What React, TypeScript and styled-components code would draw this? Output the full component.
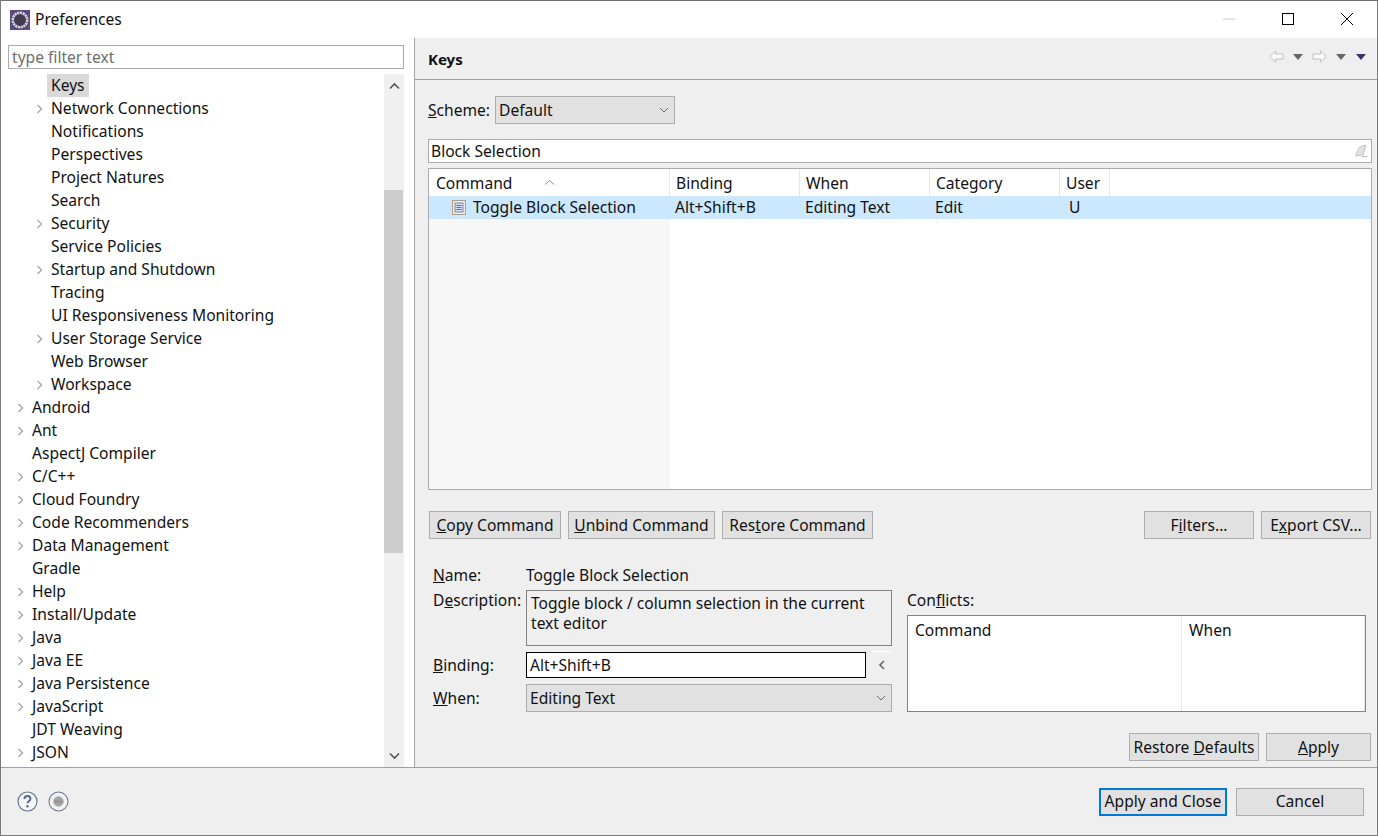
import React from "react";
import styled, { createGlobalStyle } from "styled-components";

const Global = createGlobalStyle`
  html, body { margin: 0; padding: 0; background: #fff; }
  * { box-sizing: border-box; }
  body { font-family: "Noto Sans", "Open Sans", sans-serif; font-size: 15.6px; color: #111; }
`;

const Window = styled.div`
  width: 1378px; height: 836px; display: flex; flex-direction: column;
  border: 1px solid #7b7b7b; border-top-color: #6e6e6e; border-bottom-color: #7b7b7b;
  background: #efefef; overflow: hidden; line-height: 23px;
`;
const TitleBar = styled.div`
  height: 37px; flex: none; background: #fff; display: flex; align-items: center; padding: 0 1px 0 9px;
`;
const TitleText = styled.div`flex: 1; margin: -1px 0 0 5px;`;
const WinBtn = styled.div`
  width: 59px; height: 37px; display: flex; align-items: center; justify-content: center; margin-top: -1px;
`;
const Main = styled.div`flex: 1; display: flex; min-height: 0;`;
const LeftPane = styled.div`
  width: 414px; flex: none; background: #fff; display: flex; flex-direction: column;
  padding: 7px 10px 0 7px; border-right: 1px solid #a3a3a3;
`;
const FilterInput = styled.div<{ $mt?: number; $filled?: boolean }>`
  height: 24px; flex: none; border: 1px solid #ababab; background: #fff; display: flex; align-items: center;
  justify-content: space-between; padding: 0 3px 0 ${(p) => (p.$filled ? 2 : 3)}px; color: ${(p) => (p.$filled ? "#111" : "#6d6d6d")}; margin-top: ${(p) => p.$mt ?? 0}px;
`;
const TreeArea = styled.div`flex: 1; display: flex; min-height: 0; margin-top: 5px;`;
const Tree = styled.div`flex: 1; overflow: hidden;`;
const TreeRow = styled.div<{ $level: number }>`
  height: 23px; display: flex; align-items: center; padding-left: ${(p) => (p.$level ? 28 : 9)}px; white-space: nowrap;
`;
const Arrow = styled.span`width: 15px; flex: none; display: flex; align-items: center;`;
const TreeLabel = styled.span<{ $sel?: boolean }>`
  padding: 0 4px; height: 23px; margin-left: -4px; background: ${(p) => (p.$sel ? "#d9d9d9" : "transparent")};
`;
const Scrollbar = styled.div`
  width: 20px; flex: none; background: #f0f0f0; display: flex; flex-direction: column;
`;
const ScrollCap = styled.div`height: 23px; flex: none; display: flex; align-items: center; justify-content: center;`;
const ScrollSpace = styled.div`height: 93px; flex: none;`;
const ScrollThumb = styled.div`height: 363px; flex: none; background: #cdcdcd; margin-right: 1px;`;

const RightPane = styled.div`flex: 1; display: flex; flex-direction: column; min-width: 0;`;
const PageHead = styled.div`
  height: 42px; flex: none; border-bottom: 1px solid #a0a0a0; display: flex; align-items: center;
  justify-content: space-between; padding: 0 11px 0 13px;
`;
const PageTitle = styled.div`font-weight: 700; font-size: 15px; margin-top: 2px;`;
const NavIcons = styled.div`display: flex; align-items: center; margin-top: -4px;`;
const NavGap = styled.span<{ $w: number }>`width: ${(p) => p.$w}px;`;
const Body = styled.div`flex: 1; display: flex; flex-direction: column; padding: 16px 5px 0 13px; min-height: 0;`;
const SchemeRow = styled.div`display: flex; align-items: center; height: 28px;`;
const SchemeLabel = styled.span`width: 67px; flex: none;`;
const Combo = styled.div<{ $w: number }>`
  width: ${(p) => p.$w}px; height: 28px; border: 1px solid #adadad; background: #e1e1e1; display: flex;
  align-items: center; justify-content: space-between; padding: 0 4px 0 3px;
`;
const TableBox = styled.div`
  height: 322px; flex: none; margin-top: 5px; border: 1px solid #ababab; background: #fff; display: flex; flex-direction: column;
`;
const THead = styled.div`height: 27px; flex: none; display: flex;`;
const TH = styled.div<{ $w: number; $pl?: number }>`
  width: ${(p) => p.$w}px; flex: none; border-right: 1px solid #e5e5e5; padding: 3px 0 0 ${(p) => p.$pl ?? 6}px; position: relative; height: 27px;
`;
const SortMark = styled.span`position: absolute; left: 115px; top: 0;`;
const TRow = styled.div`height: 23px; flex: none; background: #cce8ff; display: flex; align-items: center;`;
const TCell = styled.div<{ $w: number; $pl?: number }>`
  width: ${(p) => p.$w}px; flex: none; padding-left: ${(p) => p.$pl ?? 5}px; display: flex; align-items: center; gap: 6px; white-space: nowrap;
`;
const TableRest = styled.div`flex: 1; display: flex;`;
const FrozenCol = styled.div`width: 241px; background: #f7f7f7;`;
const ButtonRow = styled.div`display: flex; margin-top: 21px; height: 28px; padding: 0 1px; gap: 7px;`;
const Spacer = styled.div`flex: 1;`;
const Btn = styled.div<{ $w: number; $def?: boolean }>`
  width: ${(p) => p.$w}px; height: 28px; flex: none; background: #e1e1e1; border: ${(p) => (p.$def ? "2px solid #0078d7" : "1px solid #adadad")};
  display: flex; align-items: center; justify-content: center; white-space: nowrap;
`;
const Details = styled.div`display: flex; margin-top: 25px; height: 148px; flex: none;`;
const DetailForm = styled.div`
  width: 479px; flex: none; display: grid; grid-template-columns: 93px 366px; grid-template-rows: 26px 62px 32px 28px;
  padding-left: 5px;
`;
const FormLabel = styled.div<{ $top?: number; $mt?: number }>`padding-top: ${(p) => p.$top ?? 0}px; margin-top: ${(p) => p.$mt ?? 0}px; white-space: nowrap;`;
const DescBox = styled.div`
  border: 1px solid #828282; height: 56px; padding: 2px 4px; line-height: 20px;
`;
const BindingRow = styled.div`display: flex; align-items: flex-start; height: 32px;`;
const BindingInput = styled.div`
  width: 340px; height: 26px; background: #fff; border: 1px solid #000; padding: 0 3px; display: flex; align-items: center;
`;
const BindingChevron = styled.div`
  width: 21px; height: 27px; margin: -1px 0 0 5px; border-top: 1px solid #fff; display: flex; align-items: center; justify-content: center;
`;
const Conflicts = styled.div`display: flex; flex-direction: column; width: 459px;`;
const ConflictLabel = styled.div`height: 48px; padding-top: 25px;`;
const ConflictTable = styled.div`
  height: 97px; margin-top: 3px; border: 1px solid #828282; background: #fff; display: flex;
`;
const ConflictCol = styled.div<{ $w: number }>`
  width: ${(p) => p.$w}px; border-right: 1px solid #e8e8e8; padding: 3px 0 0 7px;
`;
const ApplyRow = styled.div`display: flex; justify-content: flex-end; gap: 7px; margin-top: 21px; height: 28px; padding-right: 1px;`;
const Footer = styled.div`
  height: 68px; flex: none; border-top: 1px solid #a0a0a0; display: flex; align-items: center; padding: 0 13px 0 16px;
`;
const FooterIcons = styled.div`display: flex; gap: 10px; flex: 1;`;
const FooterBtns = styled.div`display: flex; gap: 9px;`;

const Chevron = () => (
  <svg width="12" height="12" viewBox="0 0 12 12" fill="none" stroke="#6a6a6a"><path d="M2 4l4 4 4-4" /></svg>
);
const TreeArrow = () => (
  <svg width="8" height="10" viewBox="0 0 8 10" fill="none" stroke="#a8a8a8" strokeWidth="1.4"><path d="M1.5 1l4 4-4 4" /></svg>
);
const Tri = ({ color = "#666" }: { color?: string }) => (
  <svg width="10" height="6" viewBox="0 0 10 6"><path d="M0 0h10L5 6z" fill={color} /></svg>
);
const NavArrow = ({ flip }: { flip?: boolean }) => (
  <svg width="15" height="13" viewBox="0 0 15 13" fill="#fafafa" stroke="#c0c0c0">
    <path d="M.8 6.5L6.5 1v3h7.5v5H6.5v3z" transform={flip ? "translate(15 0) scale(-1 1)" : undefined} />
  </svg>
);

const items: [string, number, boolean][] = [
  ["Keys", 1, false], ["Network Connections", 1, true], ["Notifications", 1, false], ["Perspectives", 1, false],
  ["Project Natures", 1, false], ["Search", 1, false], ["Security", 1, true], ["Service Policies", 1, false],
  ["Startup and Shutdown", 1, true], ["Tracing", 1, false], ["UI Responsiveness Monitoring", 1, false],
  ["User Storage Service", 1, true], ["Web Browser", 1, false], ["Workspace", 1, true], ["Android", 0, true],
  ["Ant", 0, true], ["AspectJ Compiler", 0, false], ["C/C++", 0, true], ["Cloud Foundry", 0, true],
  ["Code Recommenders", 0, true], ["Data Management", 0, true], ["Gradle", 0, false], ["Help", 0, true],
  ["Install/Update", 0, true], ["Java", 0, true], ["Java EE", 0, true], ["Java Persistence", 0, true],
  ["JavaScript", 0, true], ["JDT Weaving", 0, false], ["JSON", 0, true],
];

export default function App() {
  return (
    <>
      <Global />
      <Window>
        <TitleBar>
          <svg width="20" height="20" viewBox="0 0 20 20">
            <rect width="20" height="20" fill="#5a4a80" />
            <circle cx="10" cy="10" r="7.2" fill="none" stroke="#d4d4da" strokeWidth="2.6" strokeDasharray="2.2 .6" />
            <circle cx="10" cy="10" r="5.6" fill="#3f3c4e" />
          </svg>
          <TitleText>Preferences</TitleText>
          <WinBtn>
            <svg width="12" height="2"><path d="M0 1h12" stroke="#c8c8c8" /></svg>
          </WinBtn>
          <WinBtn>
            <svg width="12" height="12"><rect x=".5" y=".5" width="11" height="11" fill="none" stroke="#000" /></svg>
          </WinBtn>
          <WinBtn>
            <svg width="12" height="12"><path d="M0 0l12 12M12 0L0 12" stroke="#000" /></svg>
          </WinBtn>
        </TitleBar>
        <Main>
          <LeftPane>
            <FilterInput>type filter text</FilterInput>
            <TreeArea>
              <Tree>
                {items.map(([name, level, arrow], i) => (
                  <TreeRow key={name} $level={level}>
                    <Arrow>{arrow && <TreeArrow />}</Arrow>
                    <TreeLabel $sel={i === 0}>{name}</TreeLabel>
                  </TreeRow>
                ))}
              </Tree>
              <Scrollbar>
                <ScrollCap>
                  <svg width="11" height="8" viewBox="0 0 11 8" fill="none" stroke="#555" strokeWidth="1.6"><path d="M1 6.5l4.5-4.5L10 6.5" /></svg>
                </ScrollCap>
                <ScrollSpace />
                <ScrollThumb />
                <Spacer />
                <ScrollCap>
                  <svg width="11" height="8" viewBox="0 0 11 8" fill="none" stroke="#555" strokeWidth="1.6"><path d="M1 1.5L5.5 6 10 1.5" /></svg>
                </ScrollCap>
              </Scrollbar>
            </TreeArea>
          </LeftPane>
          <RightPane>
            <PageHead>
              <PageTitle>Keys</PageTitle>
              <NavIcons>
                <NavArrow />
                <NavGap $w={9} />
                <Tri />
                <NavGap $w={9} />
                <NavArrow flip />
                <NavGap $w={9} />
                <Tri />
                <NavGap $w={10} />
                <Tri color="#3f2f6a" />
              </NavIcons>
            </PageHead>
            <Body>
              <SchemeRow>
                <SchemeLabel><u>S</u>cheme:</SchemeLabel>
                <Combo $w={180}>Default<Chevron /></Combo>
              </SchemeRow>
              <FilterInput $mt={15} $filled>
                Block Selection
                <svg width="14" height="14" viewBox="0 0 14 14">
                  <path d="M1.5 12L5 3.5 8.5 1.5h3.5L9 11z" fill="#e2e2e2" stroke="#c4c4c4" />
                  <path d="M8 12.5h5.5" stroke="#b5b5b5" />
                </svg>
              </FilterInput>
              <TableBox>
                <THead>
                  <TH $w={241} $pl={7}>
                    Command
                    <SortMark>
                      <svg width="11" height="7" viewBox="0 0 11 7" fill="none" stroke="#8a8a8a"><path d="M1 5.5l4.5-4 4.5 4" /></svg>
                    </SortMark>
                  </TH>
                  <TH $w={130}>Binding</TH>
                  <TH $w={130}>When</TH>
                  <TH $w={130}>Category</TH>
                  <TH $w={50}>User</TH>
                </THead>
                <TRow>
                  <TCell $w={241} $pl={23}>
                    <svg width="15" height="15" viewBox="0 0 15 15">
                      <rect x=".5" y=".5" width="13" height="14" fill="#f2efe6" stroke="#a99f86" />
                      <rect x="3" y="3" width="8" height="9" fill="#d5dcf0" stroke="#5d6e9e" strokeWidth=".8" />
                      <path d="M4.5 5.5h5M4.5 7.5h5M4.5 9.5h5" stroke="#44557f" strokeWidth=".8" />
                    </svg>
                    Toggle Block Selection
                  </TCell>
                  <TCell $w={130}>Alt+Shift+B</TCell>
                  <TCell $w={130}>Editing Text</TCell>
                  <TCell $w={130}>Edit</TCell>
                  <TCell $w={50} $pl={9}>U</TCell>
                </TRow>
                <TableRest><FrozenCol /></TableRest>
              </TableBox>
              <ButtonRow>
                <Btn $w={132}><span><u>C</u>opy Command</span></Btn>
                <Btn $w={147}><span><u>U</u>nbind Command</span></Btn>
                <Btn $w={151}><span>Res<u>t</u>ore Command</span></Btn>
                <Spacer />
                <Btn $w={110}><span>F<u>i</u>lters...</span></Btn>
                <Btn $w={110}><span>E<u>x</u>port CSV...</span></Btn>
              </ButtonRow>
              <Details>
                <DetailForm>
                  <FormLabel><u>N</u>ame:</FormLabel>
                  <div>Toggle Block Selection</div>
                  <FormLabel $mt={-1}>D<u>e</u>scription:</FormLabel>
                  <DescBox>Toggle block / column selection in the current text editor</DescBox>
                  <FormLabel $top={2}><u>B</u>inding:</FormLabel>
                  <BindingRow>
                    <BindingInput>Alt+Shift+B</BindingInput>
                    <BindingChevron>
                      <svg width="8" height="10" viewBox="0 0 8 10" fill="none" stroke="#666" strokeWidth="1.6"><path d="M6 1L2 5l4 4" /></svg>
                    </BindingChevron>
                  </BindingRow>
                  <FormLabel $top={3}><u>W</u>hen:</FormLabel>
                  <Combo $w={366}>Editing Text<Chevron /></Combo>
                </DetailForm>
                <Conflicts>
                  <ConflictLabel>Con<u>f</u>licts:</ConflictLabel>
                  <ConflictTable>
                    <ConflictCol $w={274}>Command</ConflictCol>
                    <ConflictCol $w={183}>When</ConflictCol>
                  </ConflictTable>
                </Conflicts>
              </Details>
              <ApplyRow>
                <Btn $w={130}><span>Restore <u>D</u>efaults</span></Btn>
                <Btn $w={105}><span><u>A</u>pply</span></Btn>
              </ApplyRow>
            </Body>
          </RightPane>
        </Main>
        <Footer>
          <FooterIcons>
            <svg width="21" height="21" viewBox="0 0 21 21">
              <circle cx="10.5" cy="10.5" r="9.5" fill="#f6f6f6" stroke="#6b7b96" strokeWidth="1.2" />
              <path d="M7.5 8c0-2 1.4-3 3-3s3 1 3 2.7c0 2.3-3 2.3-3 4.6" fill="none" stroke="#55688a" strokeWidth="1.9" />
              <circle cx="10.5" cy="15.3" r="1.2" fill="#55688a" />
            </svg>
            <svg width="21" height="21" viewBox="0 0 21 21">
              <circle cx="10.5" cy="10.5" r="9.5" fill="#f3f3f3" stroke="#6b7b96" strokeWidth="1.1" />
              <circle cx="10.5" cy="10.5" r="5" fill="#a3a3a3" stroke="#c4c4c4" />
              <path d="M6 10.5h9" stroke="#8e8e8e" strokeWidth="1.6" />
            </svg>
          </FooterIcons>
          <FooterBtns>
            <Btn $w={128} $def>Apply and Close</Btn>
            <Btn $w={128}>Cancel</Btn>
          </FooterBtns>
        </Footer>
      </Window>
    </>
  );
}
